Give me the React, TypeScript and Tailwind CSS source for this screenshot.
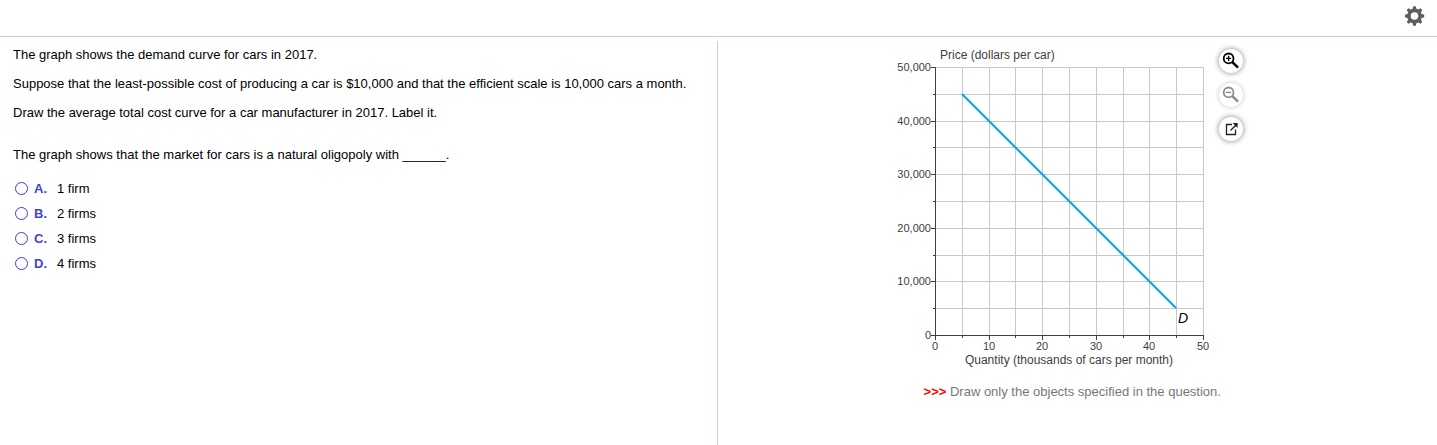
import React from "react";

const xTicks = [0, 27, 54, 80, 107, 134, 161, 188, 214, 241, 268];
const yTicks = [0, 27, 54, 80, 107, 134, 161, 188, 214, 241, 268];
const xLabels = ["0", "10", "20", "30", "40", "50"];
const yLabels = ["50,000", "40,000", "30,000", "20,000", "10,000", "0"];
const choices = [
  { letter: "A", text: "1 firm" },
  { letter: "B", text: "2 firms" },
  { letter: "C", text: "3 firms" },
  { letter: "D", text: "4 firms" },
];

function GearIcon() {
  const angles = [0, 45, 90, 135, 180, 225, 270, 315];
  return (
    <svg viewBox="-9.5 -10 20 20" className="size-5" aria-hidden="true">
      <circle r="5.6" fill="none" stroke="#5e5e5e" strokeWidth="3.6" />
      {angles.map((a) => (
        <path key={a} d="M-1.9 -6.5 L-1.5 -9.2 Q-1.4 -9.7 -0.9 -9.7 H0.9 Q1.4 -9.7 1.5 -9.2 L1.9 -6.5 Z" fill="#5e5e5e" transform={`rotate(${a})`} />
      ))}
    </svg>
  );
}

function Magnifier({ plus }: { plus?: boolean }) {
  return (
    <svg viewBox="0 0 24 24" className="size-full" fill="none" stroke="currentColor" aria-hidden="true">
      <circle cx="9.6" cy="9.4" r="4.9" strokeWidth="1.8" />
      <path d="M13.1 12.9 L19 18.6" strokeWidth="2.5" />
      <path d={plus ? "M7 9.4 H12.2 M9.6 6.8 V12" : "M7 9.4 H12.2"} strokeWidth="1.4" />
    </svg>
  );
}

function PopOut() {
  return (
    <svg viewBox="0 0 24 24" className="size-full" fill="none" stroke="currentColor" aria-hidden="true">
      <path d="M13 7.5 H7.5 V17.5 H16.5 V12.5" strokeWidth="1.3" />
      <path d="M11.5 13.5 L17 8" strokeWidth="1.4" />
      <path d="M13.6 6 H18.6 V11 Z" fill="currentColor" stroke="none" />
    </svg>
  );
}

function Chart() {
  return (
    <svg width="322" height="326" viewBox="0 0 322 326" role="img" aria-label="Demand curve for cars" className="shrink-0 font-['Liberation_Sans',Arial,sans-serif]">
      <g stroke="#c8c8c8" shapeRendering="crispEdges">
        {xTicks.slice(1).map((x) => (
          <path key={x} d={`M${45.5 + x} 21 V290`} />
        ))}
        {yTicks.slice(0, -1).map((y) => (
          <path key={y} d={`M45 ${21.5 + y} H314`} />
        ))}
      </g>
      <g stroke="#404040" shapeRendering="crispEdges">
        <path d="M45.5 21 V290 M45 289.5 H314" />
        {xTicks.map((x, i) => (
          <path key={x} d={`M${45.5 + x} 290 V${i % 2 ? 292 : 294}`} />
        ))}
        {yTicks.map((y, i) => (
          <path key={y} d={`M45 ${21.5 + y} H${i % 2 ? 43 : 41}`} />
        ))}
      </g>
      <path d="M72 48 L286 262" stroke="#0ca4ee" strokeWidth="2.1" />
      <g fill="#404040" fontSize="11">
        {yLabels.map((label, i) => (
          <text key={label} x="41" y={25 + yTicks[i * 2]} textAnchor="end">{label}</text>
        ))}
        {xLabels.map((label, i) => (
          <text key={label} x={45 + xTicks[i * 2]} y="304" textAnchor="middle">{label}</text>
        ))}
      </g>
      <g fill="#404040" fontSize="12">
        <text x="50" y="13">Price (dollars per car)</text>
        <text x="179" y="318" textAnchor="middle">Quantity (thousands of cars per month)</text>
      </g>
      <text x="288" y="277" fontSize="14" fontStyle="italic" fill="#000">D</text>
    </svg>
  );
}

const round = "size-6 rounded-full bg-white shadow-[0_0_5px_1px_rgba(0,0,0,0.35)]";

export default function App() {
  return (
    <div className="flex min-h-screen flex-col bg-white font-['Liberation_Sans',Arial,sans-serif] text-[13px] leading-4 text-black">
      <header className="flex justify-end border-b border-[#c9cfdd] px-3 pt-1.5 pb-2.5">
        <button type="button" aria-label="Settings" className="block">
          <GearIcon />
        </button>
      </header>
      <main className="flex grow pt-1">
        <section className="w-[calc(50%-1px)] border-r border-[#c9cfdd] pt-1.5 pl-[13px]">
          <div className="flex flex-col gap-[13px]">
            <p>The graph shows the demand curve for cars in 2017.</p>
            <p>Suppose that the least-possible cost of producing a car is $10,000 and that the efficient scale is 10,000 cars a month.</p>
            <p>Draw the average total cost curve for a car manufacturer in 2017. Label it.</p>
          </div>
          <fieldset className="mt-[26px]">
            <legend>The graph shows that the market for cars is a natural oligopoly with ______.</legend>
            <div className="mt-[13px] flex flex-col">
              {choices.map((c) => (
                <label key={c.letter} className="flex h-[25px] items-center pl-0.5">
                  <input type="radio" name="firms" value={c.letter} className="size-[13px] shrink-0 appearance-none rounded-full border border-[#3c3cdc] checked:border-4" />
                  <span className="ml-1.5 w-[23px] font-bold text-[#4444cc]">{c.letter}.</span>
                  <span>{c.text}</span>
                </label>
              ))}
            </div>
          </fieldset>
        </section>
        <section className="flex flex-1 flex-col items-center pt-[5px]">
          <div className="flex gap-[7px] pr-[22px]">
            <Chart />
            <div className="flex flex-col gap-2.5 pt-[3px]">
              <button type="button" aria-label="Zoom in" className={`${round} text-black`}><Magnifier plus /></button>
              <button type="button" aria-label="Zoom out" disabled className="size-6 rounded-full bg-white text-[#8c8c8c] shadow-[0_0_4px_1px_rgba(0,0,0,0.16)]"><Magnifier /></button>
              <button type="button" aria-label="Open in new window" className={`${round} text-[#222]`}><PopOut /></button>
            </div>
          </div>
          <p className="mt-3 pr-2.5 text-[#777]">
            <span className="font-bold text-[#f00]">&gt;&gt;&gt;</span> Draw only the objects specified in the question.
          </p>
        </section>
      </main>
    </div>
  );
}
